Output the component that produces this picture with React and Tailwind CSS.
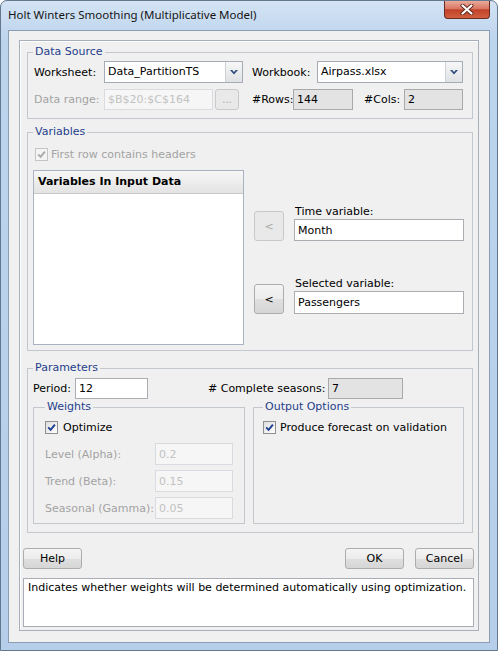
import React from "react";

// Holt Winters dialog (Swing / Win7 look)

function Group({ title, className = "", children }) {
  return (
    <fieldset className={`min-w-0 border border-[#c3c8cf] ${className}`}>
      <legend className="px-[2px] text-[11px] leading-[14px] text-[#1f3f8c]">
        {title}
      </legend>
      {children}
    </fieldset>
  );
}

function Field({ value, width, kind = "normal" }) {
  const look =
    kind === "readonly"
      ? "bg-[#e3e3e3] border-[#a9a9a9] text-black"
      : kind === "disabled"
      ? "bg-[#f6f6f6] border-[#d9dbe0] text-[#c2c2c2]"
      : "bg-white border-[#abadb3] text-black";
  return (
    <div
      className={`h-full shrink-0 border pl-[3px] flex items-center whitespace-nowrap overflow-hidden ${look}`}
      style={{ width }}
    >
      {value}
    </div>
  );
}

function Combo({ value, width }) {
  return (
    <div
      className="h-[22px] shrink-0 flex border border-[#a5acb5] bg-white"
      style={{ width }}
    >
      <span className="flex-1 pl-[3px] leading-[20px] whitespace-nowrap">{value}</span>
      <span className="w-[17px] border-l border-[#cdd1d6] bg-[linear-gradient(#f7f7f7,#dfe1e4)] flex items-center justify-center">
        <svg width="8" height="5" viewBox="0 0 8 5">
          <path d="M0 0 H2.2 L4 2 L5.8 0 H8 L4 4.6 Z" fill="#2f4a7e" />
        </svg>
      </span>
    </div>
  );
}

function Check({ disabled }) {
  return (
    <span
      className={`w-[13px] h-[13px] shrink-0 border flex items-center justify-center ${
        disabled
          ? "border-[#c4c4c4] bg-[#f4f4f4]"
          : "border-[#8e8f8f] bg-[linear-gradient(135deg,#dedede,#ffffff)]"
      }`}
    >
      <svg width="9" height="9" viewBox="0 0 9 9">
        <path
          d="M1.2 4.4 L3.6 6.9 L7.9 1.6"
          fill="none"
          stroke={disabled ? "#a9a9a9" : "#1f3f8f"}
          strokeWidth="1.9"
        />
      </svg>
    </span>
  );
}

function Btn({ children, className = "", disabled }) {
  return (
    <div
      className={`shrink-0 flex items-center justify-center rounded-[3px] border ${
        disabled
          ? "border-[#c9c9c9] bg-[#e9e9e9] text-[#a8a8a8]"
          : "border-[#adadad] bg-[linear-gradient(#f4f4f4_0%,#ececec_50%,#dfdfdf_51%,#d6d6d6_100%)] text-black"
      } ${className}`}
    >
      {children}
    </div>
  );
}

export default function App() {
  return (
    <div className="w-[498px] h-[651px] flex flex-col rounded-t-[7px] border border-[#61788f] bg-[linear-gradient(180deg,#d3e3f4_0%,#bdd4ed_6%,#b6cee9_100%)] px-[7px] pb-[7px] font-['DejaVu_Sans',sans-serif] text-[11px] leading-[15px] text-black">
      {/* title bar */}
      <div className="h-[29px] flex items-start justify-between">
        <span className="mt-[6px] font-['Noto_Sans',sans-serif] text-[11.5px] leading-[16px] text-[#151515]">
          Holt Winters Smoothing (Multiplicative Model)
        </span>
        <div className="w-[46px] h-[18px] rounded-b-[4px] border border-t-0 border-[#6a2b20] bg-[linear-gradient(#eaaa9b_0%,#d87762_45%,#c2412a_52%,#d0603f_100%)] flex items-center justify-center">
          <svg width="14" height="11" viewBox="0 0 14 11">
            <path d="M2.5 1.5 L11.5 9.5 M11.5 1.5 L2.5 9.5" stroke="#5b241b" strokeWidth="4" strokeLinecap="round" />
            <path d="M2.5 1.5 L11.5 9.5 M11.5 1.5 L2.5 9.5" stroke="#ffffff" strokeWidth="2.2" strokeLinecap="round" />
          </svg>
        </div>
      </div>

      {/* client area */}
      <div className="flex-1 border border-[#8b9db3] bg-[#f0f0f0] px-[10px] pt-[9px] pb-[11px]">
        <div className="h-full flex flex-col border border-[#a7b0ba] shadow-[inset_1px_1px_0_#ffffff] px-[3px] pt-[4px]">
          {/* Data Source */}
          <Group title="Data Source" className="ml-[4px] w-[446px] h-[74px] pl-[5px]">
            <div className="mt-[2px] h-[22px] flex items-center whitespace-nowrap">
              <span className="ml-[1px] w-[70px] shrink-0">Worksheet:</span>
              <Combo value="Data_PartitionTS" width={139} />
              <span className="ml-[9px] w-[65px] shrink-0">Workbook:</span>
              <Combo value="Airpass.xlsx" width={146} />
            </div>
            <div className="mt-[6px] h-[21px] flex items-center whitespace-nowrap">
              <span className="ml-[1px] w-[70px] shrink-0 text-[#a3a3a3]">Data range:</span>
              <Field value="$B$20:$C$164" width={109} kind="disabled" />
              <Btn disabled className="ml-[2px] w-[24px] h-[21px] text-[10px] leading-[10px] rounded-[2px]">
                ...
              </Btn>
              <span className="ml-[13px] w-[41px] shrink-0">#Rows:</span>
              <Field value="144" width={60} kind="readonly" />
              <span className="ml-[11px] w-[40px] shrink-0">#Cols:</span>
              <Field value="2" width={59} kind="readonly" />
            </div>
          </Group>

          {/* Variables */}
          <Group title="Variables" className="mt-[6px] ml-[4px] w-[446px] h-[226px] pl-[5px]">
            <div className="mt-[7px] h-[17px] flex items-center">
              <span className="ml-[2px]">
                <Check disabled />
              </span>
              <span className="ml-[3px] text-[#a3a3a3]">First row contains headers</span>
            </div>
            <div className="mt-[7px] flex">
              <div className="w-[211px] h-[175px] flex flex-col border border-[#a9b3c4] bg-white">
                <div className="h-[23px] border-b border-[#c9c9c9] bg-[linear-gradient(#f7f7f7,#e3e3e3)] pl-[4px] leading-[22px] font-bold">
                  Variables In Input Data
                </div>
              </div>
              <div className="ml-[10px] pt-[34px] flex flex-col">
                <div className="flex items-end">
                  <Btn disabled className="w-[30px] h-[30px]">
                    &lt;
                  </Btn>
                  <div className="ml-[10px] flex flex-col">
                    <span className="pl-[1px] leading-[15px]">Time variable:</span>
                    <div className="h-[22px]">
                      <Field value="Month" width={170} />
                    </div>
                  </div>
                </div>
                <div className="mt-[36px] flex items-end">
                  <Btn className="w-[30px] h-[30px]">&lt;</Btn>
                  <div className="ml-[10px] flex flex-col">
                    <span className="pl-[1px] leading-[14px]">Selected variable:</span>
                    <div className="h-[23px]">
                      <Field value="Passengers" width={170} />
                    </div>
                  </div>
                </div>
              </div>
            </div>
          </Group>

          {/* Parameters */}
          <Group title="Parameters" className="mt-[10px] ml-[4px] w-[446px] h-[172px] pl-[5px]">
            <div className="mt-[3px] h-[21px] flex items-center whitespace-nowrap">
              <span className="w-[42px] shrink-0">Period:</span>
              <Field value="12" width={73} />
              <span className="ml-[60px] w-[120px] shrink-0"># Complete seasons:</span>
              <Field value="7" width={75} kind="readonly" />
            </div>
            <div className="mt-[1px] flex">
              <Group title="Weights" className="w-[212px] h-[124px] pl-[11px]">
                <div className="mt-[5px] h-[17px] flex items-center">
                  <Check />
                  <span className="ml-[5px]">Optimize</span>
                </div>
                {[
                  ["Level (Alpha):", "0.2"],
                  ["Trend (Beta):", "0.15"],
                  ["Seasonal (Gamma):", "0.05"],
                ].map(([label, v], i) => (
                  <div
                    key={label}
                    className={`h-[22px] flex items-center ${i === 0 ? "mt-[7px]" : "mt-[5px]"}`}
                  >
                    <span className="w-[110px] shrink-0 text-[#a3a3a3] whitespace-nowrap">{label}</span>
                    <Field value={v} width={78} kind="disabled" />
                  </div>
                ))}
              </Group>
              <Group title="Output Options" className="ml-[8px] w-[211px] h-[124px] pl-[9px]">
                <div className="mt-[5px] h-[17px] flex items-center whitespace-nowrap">
                  <Check />
                  <span className="ml-[4px]">Produce forecast on validation</span>
                </div>
              </Group>
            </div>
          </Group>

          {/* buttons */}
          <div className="mt-[15px] w-[451px] h-[21px] flex">
            <Btn className="w-[59px] h-[21px]">Help</Btn>
            <Btn className="ml-auto w-[59px] h-[21px]">OK</Btn>
            <Btn className="ml-[11px] w-[59px] h-[21px]">Cancel</Btn>
          </div>

          {/* description */}
          <div className="mt-[9px] w-[451px] h-[49px] border border-[#a9aeb6] bg-white pl-[4px] pt-[1px] whitespace-nowrap">
            Indicates whether weights will be determined automatically using optimization.
          </div>
        </div>
      </div>
    </div>
  );
}
